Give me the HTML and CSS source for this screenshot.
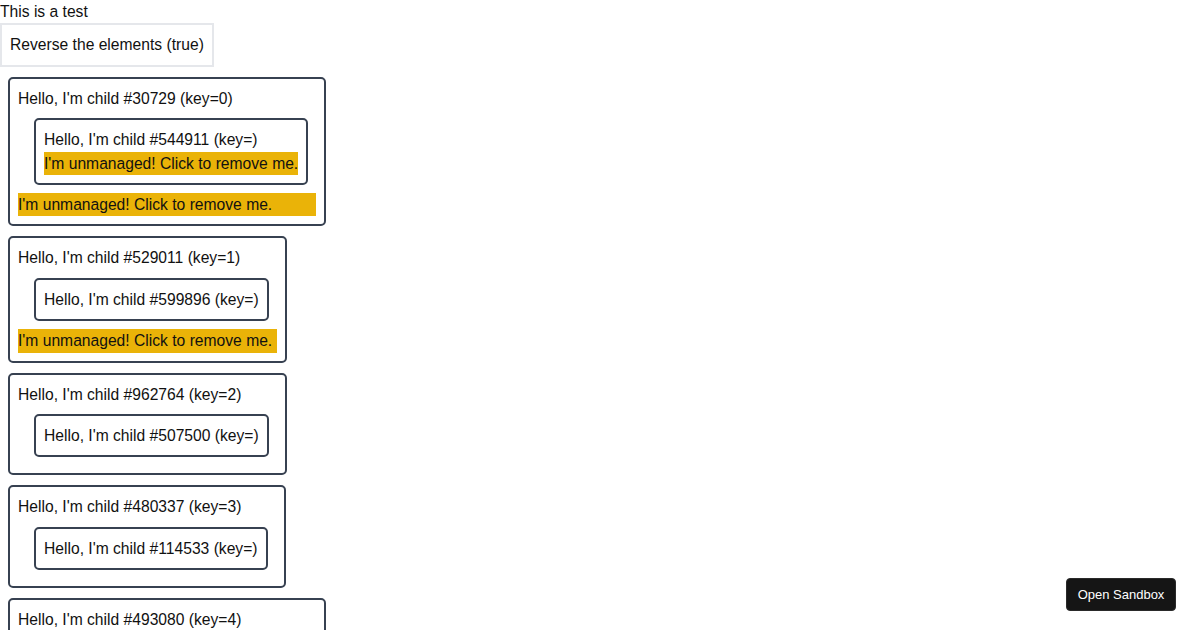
FILE: index.html
```html
<!DOCTYPE html>
<html>
<head>
<meta charset="utf-8">
<link rel="stylesheet" href="styles.css">
</head>
<body>
<div class="title">This is a test</div>
<button class="toggle">Reverse the elements (true)</button>
<div class="list">
  <div class="card">
    <div class="line">Hello, I'm child #30729 (key=0)</div>
    <div class="card inner">
      <div class="line">Hello, I'm child #544911 (key=)</div>
      <div class="unmanaged">I'm unmanaged! Click to remove me.</div>
    </div>
    <div class="unmanaged">I'm unmanaged! Click to remove me.</div>
  </div>
  <div class="card">
    <div class="line">Hello, I'm child #529011 (key=1)</div>
    <div class="card inner">
      <div class="line">Hello, I'm child #599896 (key=)</div>
    </div>
    <div class="unmanaged">I'm unmanaged! Click to remove me.</div>
  </div>
  <div class="card">
    <div class="line">Hello, I'm child #962764 (key=2)</div>
    <div class="card inner">
      <div class="line">Hello, I'm child #507500 (key=)</div>
    </div>
  </div>
  <div class="card">
    <div class="line">Hello, I'm child #480337 (key=3)</div>
    <div class="card inner">
      <div class="line">Hello, I'm child #114533 (key=)</div>
    </div>
  </div>
  <div class="card">
    <div class="line">Hello, I'm child #493080 (key=4)</div>
    <div class="card inner">
      <div class="line">Hello, I'm child #210457 (key=)</div>
      <div class="unmanaged">I'm unmanaged! Click to remove me.</div>
    </div>
  </div>
</div>
<button class="sandbox">Open Sandbox</button>
</body>
</html>
```
FILE: styles.css
```css
html, body {
  margin: 0;
  padding: 0;
}
body {
  font-family: "Liberation Sans", Arial, sans-serif;
  font-size: 15.65px;
  line-height: 23.4px;
  color: #111;
  background: #fff;
  overflow: hidden;
}
.title {
  line-height: 23.4px;
}
.toggle {
  display: block;
  font: inherit;
  line-height: 23.4px;
  color: #111;
  background: #fff;
  border: 2px solid #e5e7eb;
  padding: 8px 8px;
  margin: 0;
  cursor: pointer;
}
.list {
  display: flex;
  flex-direction: column;
  align-items: flex-start;
  gap: 10px;
  margin: 10px 0 0 8px;
}
.card {
  border: 2px solid #374151;
  border-radius: 5px;
  padding: 8px;
}
.card.inner {
  margin: 8px 8px 8px 16px;
}
.unmanaged {
  background: #eab308;
  color: #111;
}
.sandbox {
  position: fixed;
  right: 24px;
  bottom: 19px;
  width: 110px;
  height: 33px;
  background: #151515;
  color: #fff;
  border: 1px solid #2a2a2a;
  border-radius: 4px;
  font-family: "Liberation Sans", Arial, sans-serif;
  font-size: 13px;
  padding: 0;
}
```
